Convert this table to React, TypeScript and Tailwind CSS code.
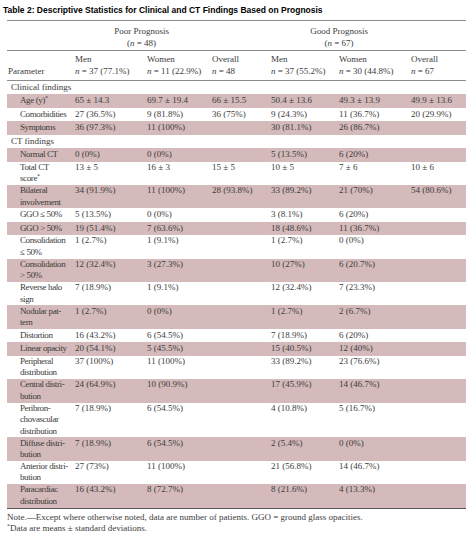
import React from 'react'

type Row = { label: React.ReactNode[]; vals: string[]; shade?: boolean }

const clinical: Row[] = [
  { label: [<>Age (y)<sup className="text-[6px]">*</sup></>], vals: ['65 ± 14.3', '69.7 ± 19.4', '66 ± 15.5', '50.4 ± 13.6', '49.3 ± 13.9', '49.9 ± 13.6'], shade: true },
  { label: ['Comorbidities'], vals: ['27 (36.5%)', '9 (81.8%)', '36 (75%)', '9 (24.3%)', '11 (36.7%)', '20 (29.9%)'] },
  { label: ['Symptoms'], vals: ['36 (97.3%)', '11 (100%)', '', '30 (81.1%)', '26 (86.7%)', ''], shade: true },
]

const ct: Row[] = [
  { label: ['Normal CT'], vals: ['0 (0%)', '0 (0%)', '', '5 (13.5%)', '6 (20%)', ''], shade: true },
  { label: ['Total CT', <>score<sup className="text-[6px]">*</sup></>], vals: ['13 ± 5', '16 ± 3', '15 ± 5', '10 ± 5', '7 ± 6', '10 ± 6'] },
  { label: ['Bilateral', 'involvement'], vals: ['34 (91.9%)', '11 (100%)', '28 (93.8%)', '33 (89.2%)', '21 (70%)', '54 (80.6%)'], shade: true },
  { label: ['GGO ≤ 50%'], vals: ['5 (13.5%)', '0 (0%)', '', '3 (8.1%)', '6 (20%)', ''] },
  { label: ['GGO > 50%'], vals: ['19 (51.4%)', '7 (63.6%)', '', '18 (48.6%)', '11 (36.7%)', ''], shade: true },
  { label: ['Consolidation', '≤ 50%'], vals: ['1 (2.7%)', '1 (9.1%)', '', '1 (2.7%)', '0 (0%)', ''] },
  { label: ['Consolidation', '> 50%'], vals: ['12 (32.4%)', '3 (27.3%)', '', '10 (27%)', '6 (20.7%)', ''], shade: true },
  { label: ['Reverse halo', 'sign'], vals: ['7 (18.9%)', '1 (9.1%)', '', '12 (32.4%)', '7 (23.3%)', ''] },
  { label: ['Nodular pat-', 'tern'], vals: ['1 (2.7%)', '0 (0%)', '', '1 (2.7%)', '2 (6.7%)', ''], shade: true },
  { label: ['Distortion'], vals: ['16 (43.2%)', '6 (54.5%)', '', '7 (18.9%)', '6 (20%)', ''] },
  { label: ['Linear opacity'], vals: ['20 (54.1%)', '5 (45.5%)', '', '15 (40.5%)', '12 (40%)', ''], shade: true },
  { label: ['Peripheral', 'distribution'], vals: ['37 (100%)', '11 (100%)', '', '33 (89.2%)', '23 (76.6%)', ''] },
  { label: ['Central distri-', 'bution'], vals: ['24 (64.9%)', '10 (90.9%)', '', '17 (45.9%)', '14 (46.7%)', ''], shade: true },
  { label: ['Peribron-', 'chovascular', 'distribution'], vals: ['7 (18.9%)', '6 (54.5%)', '', '4 (10.8%)', '5 (16.7%)', ''] },
  { label: ['Diffuse distri-', 'bution'], vals: ['7 (18.9%)', '6 (54.5%)', '', '2 (5.4%)', '0 (0%)', ''], shade: true },
  { label: ['Anterior distri-', 'bution'], vals: ['27 (73%)', '11 (100%)', '', '21 (56.8%)', '14 (46.7%)', ''] },
  { label: ['Paracardiac', 'distribution'], vals: ['16 (43.2%)', '8 (72.7%)', '', '8 (21.6%)', '4 (13.3%)', ''], shade: true },
]

const N = ({ children }: { children: React.ReactNode }) => (
  <>
    <i>n</i> = {children}
  </>
)

const DataRow = ({ row }: { row: Row }) => {
  // single-line rows sit a little taller than the wrapped ones
  const cell = row.label.length === 1 ? 'h-[13.5px] py-0 align-middle' : 'py-[0.2px] align-top'

  return (
    <tr className={row.shade ? 'bg-[#d4baba]' : ''}>
      <td className={`pl-[13px] pr-0 whitespace-nowrap tracking-[-0.4px] ${cell}`}>
        {row.label.map((l, i) => (
          <div key={i}>{l}</div>
        ))}
      </td>
      {row.vals.map((v, i) => (
        <td key={i} className={`pl-[2px] whitespace-nowrap ${cell}`}>
          {v}
        </td>
      ))}
    </tr>
  )
}

const Section = ({ title }: { title: string }) => (
  <tr>
    <td colSpan={7} className="pl-[4px] h-[13.5px] py-0 align-middle">
      {title}
    </td>
  </tr>
)

export default function App() {
  return (
    <div className="w-[474px] h-[540px] bg-white overflow-hidden text-[#3c3c3c] font-['Liberation_Serif',serif]">
      <div className="pl-[3px] pt-[4px] h-[20px] text-[8.5px] font-bold text-black font-['Liberation_Sans',sans-serif]">
        Table 2: Descriptive Statistics for Clinical and CT Findings Based on Prognosis
      </div>
      <div className="pl-[7px]">
        <table className="w-[459px] table-fixed border-collapse text-[9px] leading-[11.5px]">
          <colgroup>
            <col className="w-[66px]" />
            <col className="w-[72px]" />
            <col className="w-[65px]" />
            <col className="w-[59px]" />
            <col className="w-[68px]" />
            <col className="w-[72px]" />
            <col className="w-[57px]" />
          </colgroup>
          <thead>
            <tr className="border-t border-b border-[#8c8c8c]">
              <td className="h-[30px]" />
              <td colSpan={2} className="text-center align-top pt-[4px] leading-[12px]">
                <div>Poor Prognosis</div>
                <div>
                  (<N>48</N>)
                </div>
              </td>
              <td />
              <td colSpan={2} className="text-center align-top pt-[4px] leading-[12px]">
                <div>Good Prognosis</div>
                <div>
                  (<N>67</N>)
                </div>
              </td>
              <td />
            </tr>
            <tr className="border-b border-[#8c8c8c]">
              <td className="h-[30px] align-bottom pl-[1px] pb-[3px]">Parameter</td>
              {[
                ['Men', '37 (77.1%)'],
                ['Women', '11 (22.9%)'],
                ['Overall', '48'],
                ['Men', '37 (55.2%)'],
                ['Women', '30 (44.8%)'],
                ['Overall', '67'],
              ].map(([h, n], i) => (
                <td key={i} className="align-bottom pl-[2px] pb-[3px] whitespace-nowrap">
                  <div>{h}</div>
                  <div>
                    <N>{n}</N>
                  </div>
                </td>
              ))}
            </tr>
          </thead>
          <tbody className="border-b border-[#5a5a5a]">
            <Section title="Clinical findings" />
            {clinical.map((r, i) => (
              <DataRow key={i} row={r} />
            ))}
            <Section title="CT findings" />
            {ct.map((r, i) => (
              <DataRow key={i} row={r} />
            ))}
          </tbody>
        </table>
        <div className="pt-[3px] text-[9px] leading-[11px]">
          <div>Note.—Except where otherwise noted, data are number of patients. GGO = ground glass opacities.</div>
          <div>
            <sup className="text-[6px]">*</sup>Data are means ± standard deviations.
          </div>
        </div>
      </div>
    </div>
  )
}
